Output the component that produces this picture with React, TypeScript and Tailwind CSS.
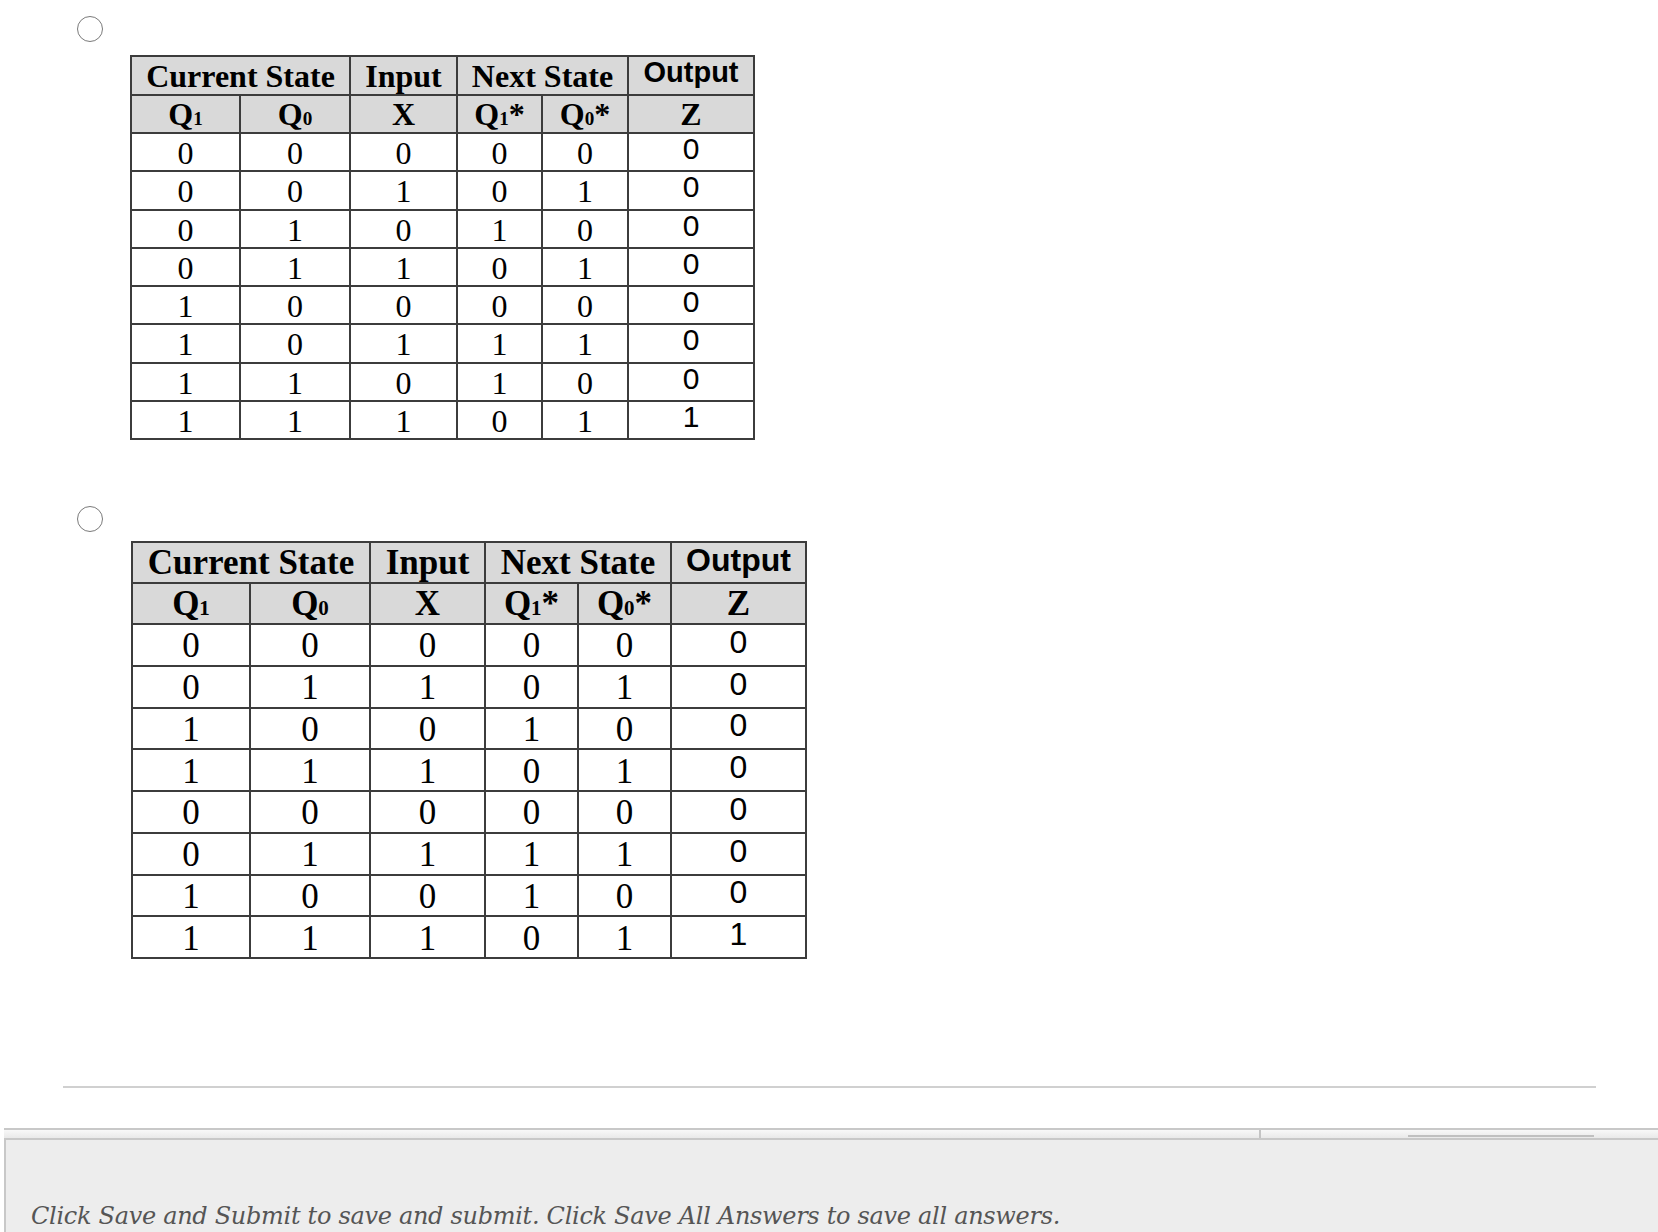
const serif = "font-['Liberation_Serif','Times_New_Roman',serif]";
const sans = "font-['Liberation_Sans',Arial,sans-serif]";
const footerFont = "font-['DejaVu_Serif',Georgia,serif]";

type Row = [number, number, number, number, number, number];

const tableA: Row[] = [
  [0, 0, 0, 0, 0, 0],
  [0, 0, 1, 0, 1, 0],
  [0, 1, 0, 1, 0, 0],
  [0, 1, 1, 0, 1, 0],
  [1, 0, 0, 0, 0, 0],
  [1, 0, 1, 1, 1, 0],
  [1, 1, 0, 1, 0, 0],
  [1, 1, 1, 0, 1, 1],
];

const tableB: Row[] = [
  [0, 0, 0, 0, 0, 0],
  [0, 1, 1, 0, 1, 0],
  [1, 0, 0, 1, 0, 0],
  [1, 1, 1, 0, 1, 0],
  [0, 0, 0, 0, 0, 0],
  [0, 1, 1, 1, 1, 0],
  [1, 0, 0, 1, 0, 0],
  [1, 1, 1, 0, 1, 1],
];

interface Size {
  cols: number[];
  head1: string;
  head2: string;
  row: string;
  serifText: string;
  sansHead: string;
  sansDigit: string;
}

const small: Size = {
  cols: [109, 110, 107, 85, 86, 126],
  head1: "h-[39px]",
  head2: "h-[38px]",
  row: "h-[38.25px]",
  serifText: "text-[32px]",
  sansHead: "text-[29px]",
  sansDigit: "text-[30px]",
};

const large: Size = {
  cols: [118, 120, 115, 93, 93, 135],
  head1: "h-[41px]",
  head2: "h-[41px]",
  row: "h-[41.75px]",
  serifText: "text-[35px]",
  sansHead: "text-[32px]",
  sansDigit: "text-[32px]",
};

function Radio() {
  return <div className="h-[26px] w-[26px] rounded-full border-[1.5px] border-[#7a7a7a] bg-white" />;
}

function Q({ n, star }: { n: string; star?: boolean }) {
  return (
    <span>
      Q<span className="text-[0.6em]">{n}</span>
      {star ? "*" : ""}
    </span>
  );
}

function StateTable({ rows, size }: { rows: Row[]; size: Size }) {
  const cell = "border-2 border-[#3c3c3c] p-0 text-center align-middle leading-none";
  return (
    <table className={`border-collapse text-black ${serif} ${size.serifText}`}>
      <colgroup>
        {size.cols.map((w, i) => (
          <col key={i} style={{ width: w }} />
        ))}
      </colgroup>
      <thead className="bg-[#d9d9d9] font-bold">
        <tr className={size.head1}>
          <th colSpan={2} className={cell}>Current State</th>
          <th className={cell}>Input</th>
          <th colSpan={2} className={cell}>Next State</th>
          <th className={`${cell} ${sans} ${size.sansHead} pb-[6px]`}>Output</th>
        </tr>
        <tr className={size.head2}>
          <th className={cell}><Q n="1" /></th>
          <th className={cell}><Q n="0" /></th>
          <th className={cell}>X</th>
          <th className={cell}><Q n="1" star /></th>
          <th className={cell}><Q n="0" star /></th>
          <th className={cell}>Z</th>
        </tr>
      </thead>
      <tbody>
        {rows.map((r, i) => (
          <tr key={i} className={size.row}>
            {r.slice(0, 5).map((v, j) => (
              <td key={j} className={`${cell} pt-[2px]`}>{v}</td>
            ))}
            <td className={`${cell} ${sans} ${size.sansDigit} pb-[6px]`}>{r[5]}</td>
          </tr>
        ))}
      </tbody>
    </table>
  );
}

export default function App() {
  return (
    <div className="min-h-[1232px] bg-white">
      {/* option 1 */}
      <div className="pl-[77px] pt-[16px]">
        <Radio />
      </div>
      <div className="ml-[130px] mt-[13px]">
        <StateTable rows={tableA} size={small} />
      </div>

      {/* option 2 */}
      <div className="pl-[77px] pt-[66px]">
        <Radio />
      </div>
      <div className="ml-[131px] mt-[9px]">
        <StateTable rows={tableB} size={large} />
      </div>

      <div className="ml-[63px] mt-[127px] h-[2px] w-[1533px] bg-[#d0d0d0]" />

      {/* footer */}
      <div className="mt-[40px] pl-[4px]">
        <div className="h-[2px] bg-[#c8c8c8]" />
        <div className="relative h-[8px] bg-gradient-to-b from-[#f8f8f8] to-[#e9e9e9]">
          <div className="absolute left-[1255px] top-0 h-full w-[2px] bg-[#c4c4c4]" />
          <div className="absolute left-[1404px] bottom-[1px] h-[2px] w-[186px] bg-[#c0c0c0]" />
        </div>
        <div className="h-[95px] border-l-2 border-t-2 border-[#c8c8c8] bg-[#ededed] pl-[25px] pt-[62px]">
          <p className={`${footerFont} text-[24px] italic leading-[28px] tracking-[-0.3px] text-[#555]`}>
            Click Save and Submit to save and submit. Click Save All Answers to save all answers.
          </p>
        </div>
      </div>
    </div>
  );
}
